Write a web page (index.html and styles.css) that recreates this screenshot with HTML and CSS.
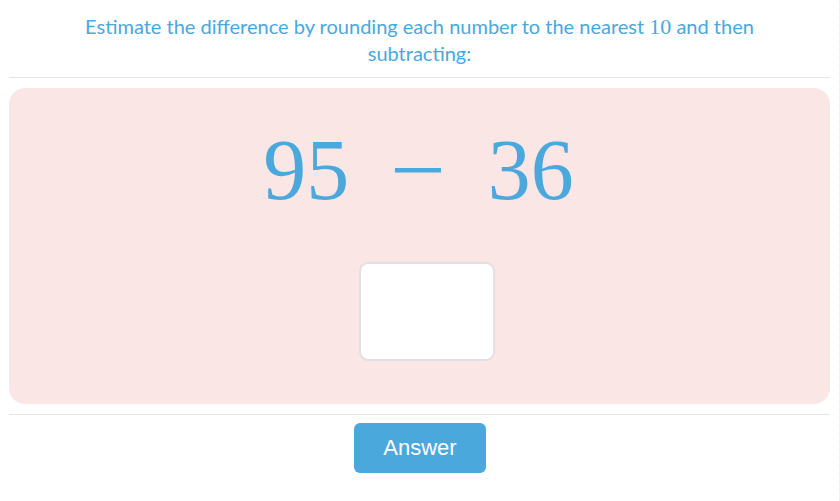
FILE: index.html
```html
<!DOCTYPE html>
<html>
<head>
<meta charset="utf-8">
<link rel="stylesheet" href="styles.css">
</head>
<body>
<div class="page">
  <div class="question">Estimate the difference by rounding each number to the nearest <span class="num">10</span> and then subtracting:</div>
  <div class="panel">
    <div class="expr"><span>95</span><span class="op">−</span><span>36</span></div>
    <div class="answer-box"></div>
  </div>
  <div class="actions">
    <button class="btn">Answer</button>
  </div>
</div>
</body>
</html>
```

FILE: styles.css
```css
html, body {
  margin: 0;
  padding: 0;
  background: #ffffff;
}
.page {
  padding: 0 9px;
  height: 501px;
  box-sizing: border-box;
  border-right: 1px dotted #e6e6e6;
}
.question {
  font-family: "Lato", "Open Sans", sans-serif;
  color: #4aa8dc;
  font-size: 20px;
  line-height: 27px;
  text-align: center;
  padding: 13px 70px 10px;
  border-bottom: 1px solid #e5e5e5;
}
.question .num {
  font-family: "Liberation Serif", serif;
  font-size: 22px;
}
.panel {
  margin-top: 10px;
  height: 316px;
  box-sizing: border-box;
  background: #fbe6e6;
  border-radius: 16px;
  padding-top: 39px;
  display: flex;
  flex-direction: column;
  align-items: center;
}
.expr {
  font-family: "Liberation Serif", serif;
  font-size: 86px;
  line-height: 1;
  color: #4aa8dc;
  display: flex;
  gap: 45px;
  margin-right: 2px;
}
.expr .op {
  transform: scaleX(1.15);
}
.answer-box {
  margin-top: 49px;
  margin-left: 14px;
  width: 136px;
  height: 99px;
  box-sizing: border-box;
  background: #ffffff;
  border: 2px solid #e3dfe5;
  border-radius: 9px;
}
.actions {
  margin-top: 10px;
  border-top: 1px solid #e5e5e5;
  padding-top: 8px;
  display: flex;
  justify-content: center;
}
.btn {
  width: 132px;
  height: 50px;
  border: none;
  border-radius: 6px;
  background: #4aa8dc;
  color: #ffffff;
  font-family: "Liberation Sans", Arial, sans-serif;
  font-size: 22px;
  margin-left: 1px;
}
```
